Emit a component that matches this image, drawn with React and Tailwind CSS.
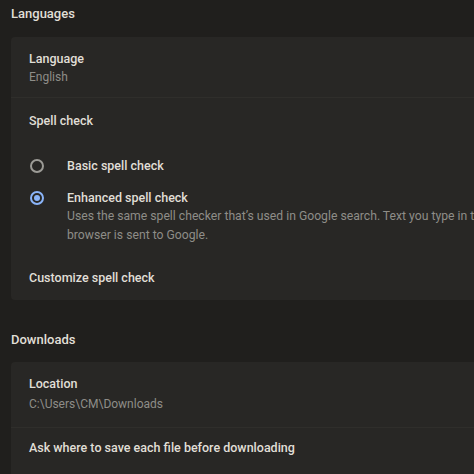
import React from "react";

function Radio({ checked }) {
  return checked ? (
    <div className="w-[14px] h-[14px] rounded-full border-2 border-[#8ab4f8] flex items-center justify-center">
      <div className="w-[6px] h-[6px] rounded-full bg-[#8ab4f8]" />
    </div>
  ) : (
    <div className="w-[14px] h-[14px] rounded-full border-2 border-[#9c9b96]" />
  );
}

export default function App() {
  return (
    <div
      className="w-[474px] h-[474px] overflow-hidden bg-[#201f1d] text-[#e0dfd7]"
      style={{ fontFamily: "Roboto, 'Liberation Sans', sans-serif" }}
    >
      <div className="pl-[11px] pt-[4px] h-[37px] text-[13px] font-medium">Languages</div>
      <div className="ml-[11px] w-[480px] bg-[#282725] rounded-l-[4px]">
        <div className="pl-[18px] pt-[13px] pb-[11px] border-b border-[#2f2e2b]">
          <div className="text-[12.5px] leading-[18px] font-medium">Language</div>
          <div className="text-[12px] leading-[18px] text-[#8e8d88]">English</div>
        </div>
        <div className="pl-[18px] pt-[14px] text-[12.5px] leading-[18px] font-medium">Spell check</div>
        <div className="pl-[19px] pt-[27px] flex items-center h-[18px] box-content">
          <Radio />
          <span className="ml-[23px] text-[12.5px] font-medium leading-[18px]">Basic spell check</span>
        </div>
        <div className="pl-[19px] pt-[14px] flex items-start">
          <div className="mt-[2px]"><Radio checked /></div>
          <div className="ml-[23px]">
            <div className="text-[12.5px] font-medium leading-[18px]">Enhanced spell check</div>
            <div className="text-[12.2px] leading-[19px] text-[#8e8d88] whitespace-nowrap">
              Uses the same spell checker that’s used in Google search. Text you type in the
            </div>
            <div className="text-[12.2px] leading-[19px] text-[#8e8d88]">browser is sent to Google.</div>
          </div>
        </div>
        <div className="pl-[18px] pt-[24px] pb-[13px] text-[12.5px] leading-[18px] font-medium">
          Customize spell check
        </div>
      </div>
      <div className="pl-[11px] pt-[30px] h-[62px] text-[13px] font-medium">Downloads</div>
      <div className="ml-[11px] w-[480px] bg-[#282725] rounded-l-[4px]">
        <div className="pl-[18px] pt-[13px] pb-[12px] border-b border-[#2f2e2b]">
          <div className="text-[12.5px] leading-[18px] font-medium">Location</div>
          <div className="text-[12px] leading-[22px] text-[#8e8d88]">C:\Users\CM\Downloads</div>
        </div>
        <div className="pl-[18px] pt-[11px] pb-[20px] text-[12.5px] leading-[18px] font-medium">
          Ask where to save each file before downloading
        </div>
      </div>
    </div>
  );
}
